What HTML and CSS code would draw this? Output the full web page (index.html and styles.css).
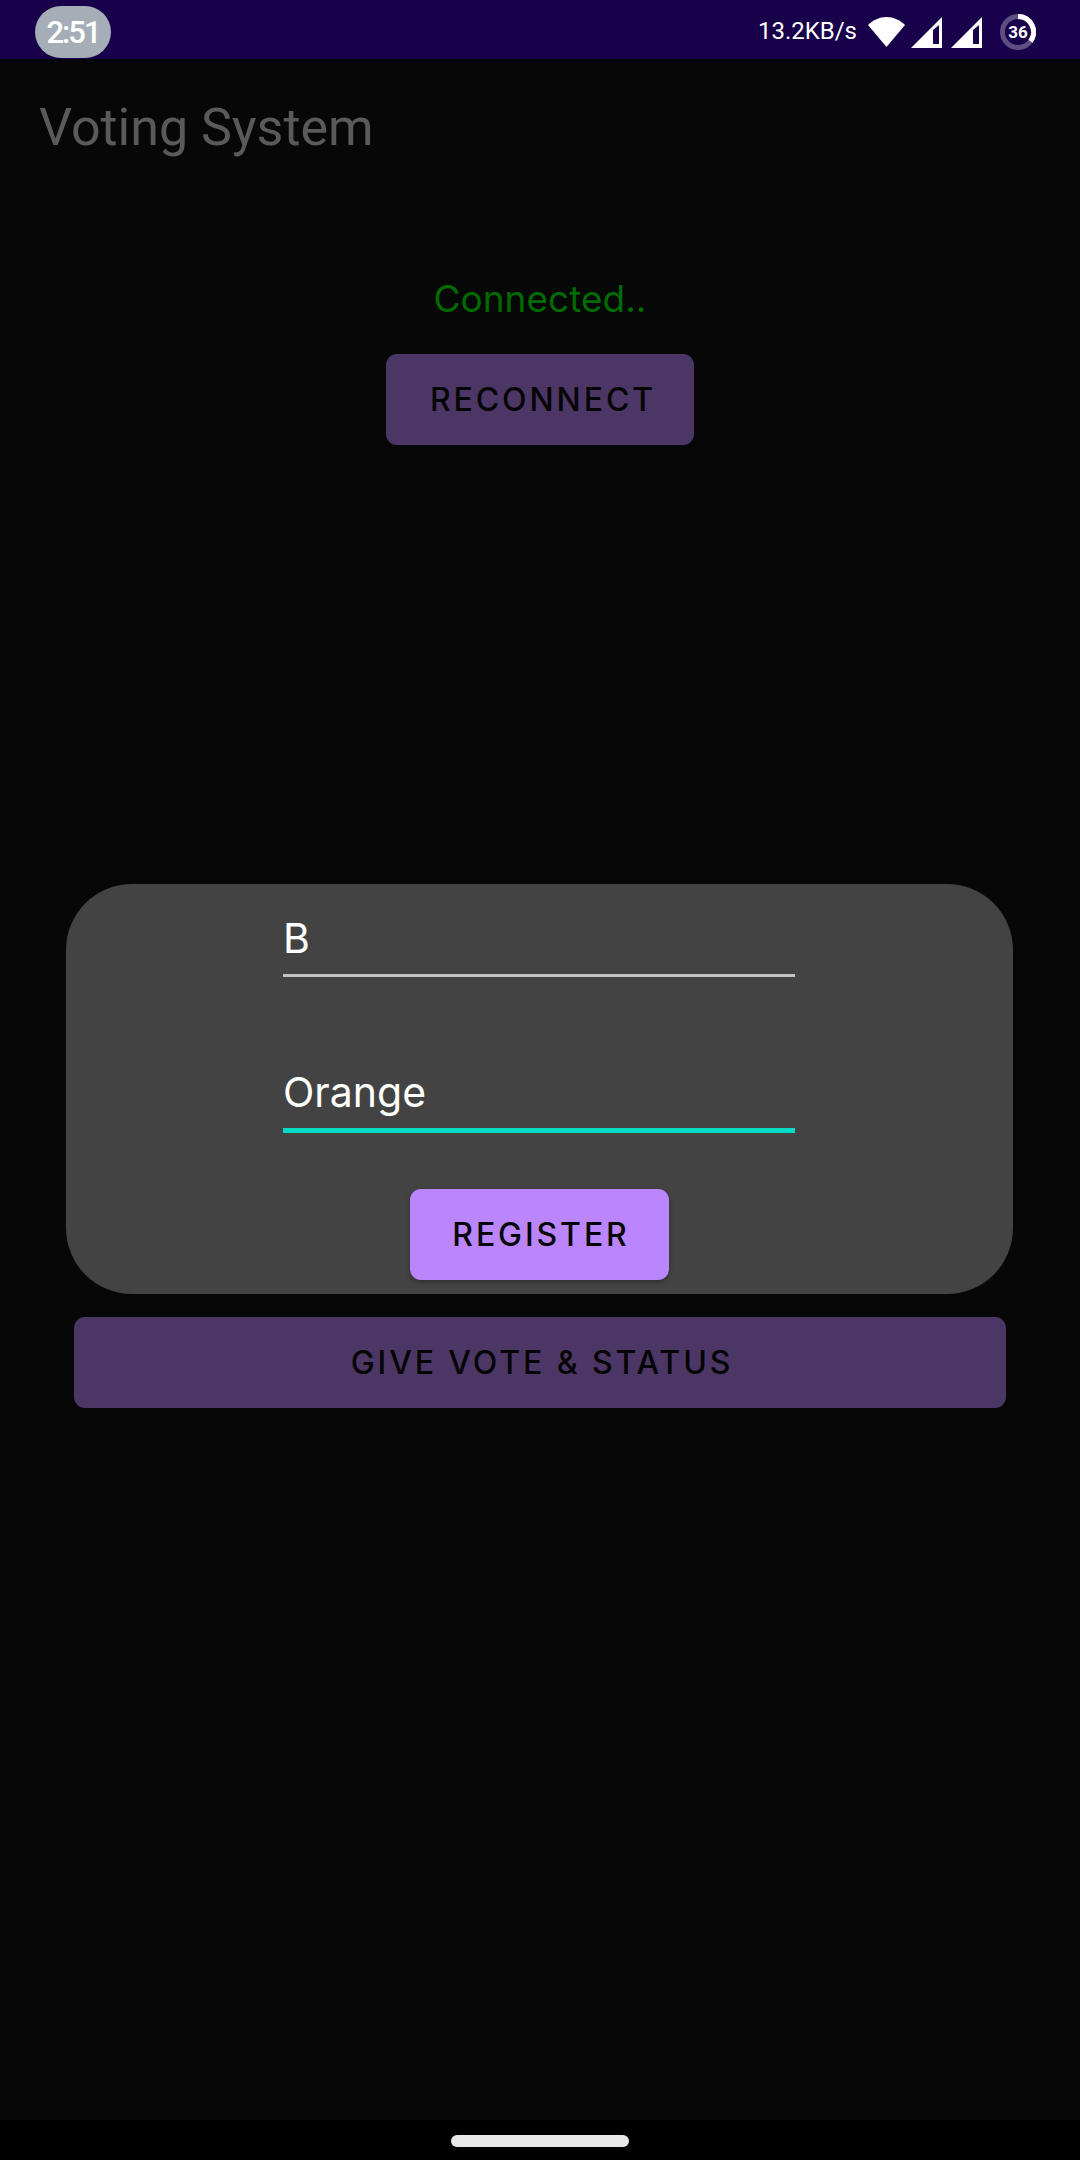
FILE: index.html
```html
<!DOCTYPE html>
<html lang="en">
<head>
    <meta charset="UTF-8">
    <title>Voting System</title>
    <link rel="stylesheet" href="styles.css">
</head>
<body>
    <div class="screen">
        <div class="status-bar">
            <div class="clock">2:51</div>
            <div class="status-icons">
                <span class="net-speed">13.2KB/s</span>
                <svg class="icon-wifi" viewBox="0 0 37 30"><path d="M0 8C5 3 11.500 0 18.500 0S32 3 37 8L18.500 30Z" fill="#fff"/></svg>
                <svg class="icon-signal" viewBox="0 0 31 31"><path fill-rule="evenodd" d="M31 0V31H0ZM22 13V27H28V8Z" fill="#fff"/></svg>
                <svg class="icon-signal" viewBox="0 0 31 31"><path fill-rule="evenodd" d="M31 0V31H0ZM22 13V27H28V8Z" fill="#fff"/></svg>
                <div class="battery">
                    <svg class="battery-ring" viewBox="0 0 36 36">
                        <circle cx="18" cy="18" r="15.500" fill="none" stroke="#5d4f80" stroke-width="5"/>
                        <path d="M18 2.500A15.500 15.500 0 0 1 30.500 27.200" fill="none" stroke="#fff" stroke-width="5"/>
                    </svg>
                    <span class="battery-level">36</span>
                </div>
            </div>
        </div>

        <div class="app-bar">Voting System</div>

        <div class="content">
            <div class="status-text">Connected..</div>
            <button class="btn btn-dim btn-reconnect">RECONNECT</button>

            <div class="register-card">
                <div class="field field-idle">B</div>
                <div class="field field-focus">Orange</div>
                <button class="btn btn-primary">REGISTER</button>
            </div>

            <button class="btn btn-dim btn-wide">GIVE VOTE &amp; STATUS</button>
        </div>

        <div class="nav-bar">
            <div class="nav-handle"></div>
        </div>
    </div>
</body>
</html>
```

FILE: styles.css
```css
* {
    margin: 0;
    padding: 0;
    box-sizing: border-box;
}

body {
    background: #070707;
    font-family: Inter, "Noto Sans", sans-serif;
    width: 1080px;
    height: 2160px;
    overflow: hidden;
}

.screen {
    display: flex;
    flex-direction: column;
    height: 2160px;
}

.status-bar {
    height: 59px;
    background: #18004a;
    display: flex;
    justify-content: space-between;
    align-items: center;
    padding: 0 44px 0 35px;
    flex-shrink: 0;
}

.clock {
    width: 76px;
    height: 52px;
    margin-top: 5px;
    border-radius: 26px;
    background: #a5aeb6;
    color: #fff;
    font-family: Roboto, sans-serif;
    font-size: 31px;
    font-weight: 500;
    letter-spacing: -2px;
    display: flex;
    align-items: center;
    justify-content: center;
}

.status-icons {
    display: flex;
    align-items: center;
    padding-top: 5px;
}

.net-speed {
    color: #fff;
    font-family: Roboto, sans-serif;
    font-size: 24px;
    margin-right: 11px;
    margin-top: -3px;
}

.icon-wifi {
    width: 37px;
    height: 30px;
    margin-right: 6px;
}

.icon-signal {
    width: 31px;
    height: 31px;
    margin-right: 9px;
}

.battery {
    position: relative;
    width: 36px;
    height: 36px;
    margin-left: 9px;
}

.battery-ring {
    width: 36px;
    height: 36px;
    display: block;
}

.battery-level {
    position: absolute;
    inset: 0;
    display: flex;
    align-items: center;
    justify-content: center;
    color: #fff;
    font-family: Roboto, sans-serif;
    font-size: 17px;
    font-weight: 700;
}

.app-bar {
    height: 100px;
    padding: 36px 0 0 39px;
    display: flex;
    align-items: center;
    color: #5a5a5a;
    font-family: Roboto, sans-serif;
    font-size: 52px;
    font-weight: 450;
    flex-shrink: 0;
}

.content {
    flex: 1;
    display: flex;
    flex-direction: column;
    align-items: center;
}

.status-text {
    margin-top: 118px;
    color: #006b00;
    font-size: 37px;
    font-weight: 400;
    line-height: 44px;
}

.btn {
    border: none;
    border-radius: 11px;
    height: 91px;
    padding-left: 4px;
    color: #050505;
    font-family: Inter, sans-serif;
    font-size: 32px;
    font-weight: 450;
    letter-spacing: 2.9px;
}

.btn-dim {
    background: #4c3666;
}

.btn-reconnect {
    width: 308px;
    margin-top: 33px;
    padding-left: 6px;
}

.btn-wide {
    width: 932px;
    margin-top: 23px;
}

.btn-primary {
    background: #bb86fc;
    width: 259px;
    box-shadow: 0 2px 5px rgb(0 0 0 / 0.3);
}

.register-card {
    width: 947px;
    height: 410px;
    margin-top: 439px;
    margin-right: 1px;
    padding-right: 1px;
    border-radius: 66px;
    background: #434343;
    display: flex;
    flex-direction: column;
    align-items: center;
}

.field {
    width: 512px;
    color: #fff;
    font-size: 41px;
    font-weight: 400;
    line-height: 48px;
}

.field-idle {
    height: 93px;
    padding-top: 30px;
    border-bottom: 3px solid #c4c4c4;
}

.field-focus {
    height: 156px;
    padding-top: 91px;
    border-bottom: 5px solid #00dcc6;
    margin-bottom: 56px;
}

.nav-bar {
    height: 40px;
    background: #000;
    display: flex;
    justify-content: center;
    flex-shrink: 0;
}

.nav-handle {
    width: 178px;
    height: 12px;
    margin-top: 15px;
    border-radius: 6px;
    background: #e8e8e8;
}
```
